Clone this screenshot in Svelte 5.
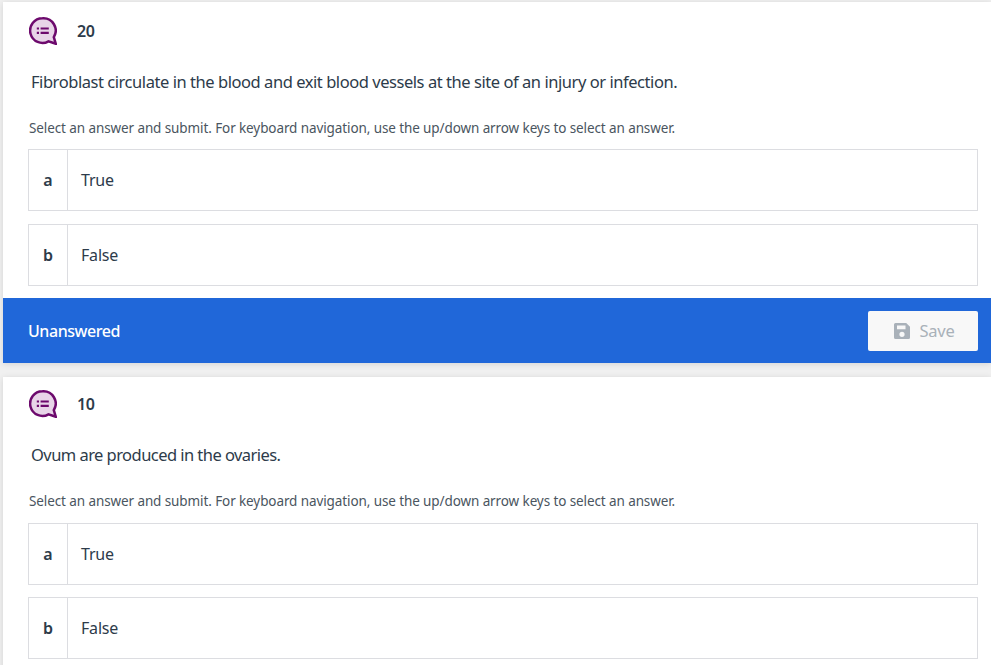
<script>
  const questions = [
    {
      points: 20,
      text: 'Fibroblast circulate in the blood and exit blood vessels at the site of an injury or infection.',
      footer: true
    },
    { points: 10, text: 'Ovum are produced in the ovaries.', footer: false }
  ];
  const options = [
    { key: 'a', label: 'True' },
    { key: 'b', label: 'False' }
  ];
</script>

<main class="page">
  {#each questions as q}
    <section class="card" class:last={!q.footer}>
      <header class="head">
        <svg class="bubble" viewBox="0 0 28 28" width="28" height="28" aria-hidden="true">
          <path
            d="M13.500 1.300a12.300 12.300 0 1 0 6 23l7.300 2.500-2-6.700A12.300 12.300 0 0 0 13.500 1.300z"
            fill="#e8d5e8"
            stroke="#6d0a6d"
            stroke-width="2.500"
            stroke-linejoin="miter"
          />
          <path d="M7.800 10.400h2.200v2.200H7.800zM7.800 14.800h2.200v2.200H7.800zM11.600 10.400h8.200v2.200h-8.200zM11.600 14.800h8.200v2.200h-8.200z" fill="#6d0a6d" />
        </svg>
        <span class="points">{q.points}</span>
      </header>
      <p class="question">{q.text}</p>
      <p class="hint">Select an answer and submit. For keyboard navigation, use the up/down arrow keys to select an answer.</p>
      <div class="options">
        {#each options as o}
          <div class="option">
            <span class="key">{o.key}</span>
            <span class="label">{o.label}</span>
          </div>
        {/each}
      </div>
      {#if q.footer}
        <footer class="status">
          <span>Unanswered</span>
          <button class="save" disabled>
            <svg viewBox="0 0 18 18" width="18" height="18" aria-hidden="true">
              <path
                fill-rule="evenodd"
                d="M2.500 1h10.700L17 4.800V15.500a1.500 1.500 0 0 1-1.500 1.500h-13A1.500 1.500 0 0 1 1 15.500v-13A1.500 1.500 0 0 1 2.500 1zM4 3.500v3.700h8.500V3.500zM9 9.700a2.600 2.600 0 1 0 0 5.200 2.600 2.600 0 0 0 0-5.200z"
                fill="#a9b1b9"
              />
            </svg>
            Save
          </button>
        </footer>
      {/if}
    </section>
  {/each}
</main>

<style>
  :global(body) {
    margin: 0;
    background: #f0f0f0;
    overflow: hidden;
  }

  .page {
    height: 665px;
    overflow: hidden;
    padding: 2px 0 0 3px;
    display: flex;
    flex-direction: column;
    gap: 14px;
    font-family: "Noto Sans", "Liberation Sans", sans-serif;
    color: #2d3b4a;
    box-sizing: border-box;
  }

  .card {
    background: #fff;
    box-shadow: 0 1px 6px rgba(0, 0, 0, 0.12);
  }

  .head {
    display: flex;
    align-items: center;
    gap: 20px;
    padding: 15px 0 0 26px;
    height: 28px;
  }

  .card.last .head {
    padding-top: 13px;
  }

  .bubble {
    display: block;
  }

  .points {
    font-size: 16px;
    font-weight: 600;
    letter-spacing: -0.4px;
  }

  .question {
    margin: 25px 0 0 28px;
    font-size: 16.500px;
    line-height: 24px;
    letter-spacing: -0.45px;
    height: 24px;
  }

  .card.last .question {
    letter-spacing: -0.55px;
  }

  .hint {
    margin: 24px 0 0 26px;
    font-size: 13.500px;
    line-height: 20px;
    letter-spacing: -0.1px;
    color: #4a5560;
  }

  .options {
    display: flex;
    flex-direction: column;
    gap: 13px;
    padding: 11px 13px 12px 25px;
  }

  .card.last .options {
    gap: 12px;
    padding-top: 12px;
  }

  .option {
    display: flex;
    height: 60px;
    border: 1px solid #dcdde1;
    font-size: 16px;
  }

  .key {
    width: 38px;
    border-right: 1px solid #dcdde1;
    display: flex;
    align-items: center;
    justify-content: center;
    font-weight: 600;
  }

  .label {
    display: flex;
    align-items: center;
    padding-left: 13px;
    letter-spacing: -0.2px;
  }

  .status {
    height: 65px;
    background: #2067d9;
    color: #fff;
    display: flex;
    align-items: center;
    justify-content: space-between;
    padding: 0 13px 0 25px;
    font-size: 16px;
    font-weight: 500;
    letter-spacing: -0.45px;
  }

  .save {
    width: 110px;
    height: 40px;
    display: flex;
    align-items: center;
    justify-content: center;
    gap: 9px;
    padding: 0 0 0 1px;
    border: 0;
    border-radius: 2px;
    background: #f8f8f8;
    color: #a9b1b9;
    font: inherit;
    font-size: 16.500px;
    font-weight: 400;
    letter-spacing: -0.3px;
  }
</style>
